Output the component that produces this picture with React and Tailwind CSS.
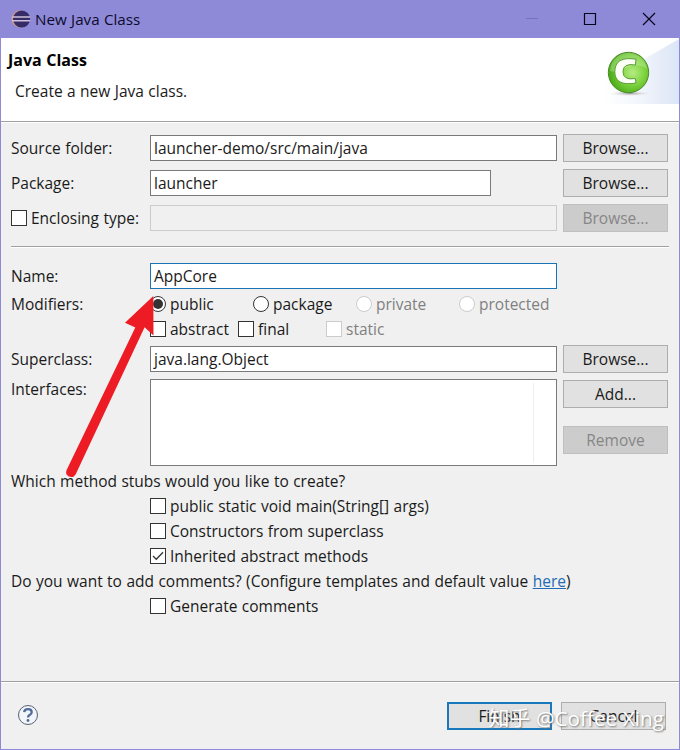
import React from 'react';

const METHOD_STUBS = [
  { label: 'public static void main(String[] args)', checked: false },
  { label: 'Constructors from superclass', checked: false },
  { label: 'Inherited abstract methods', checked: true },
];

const EclipseIcon = () => (
  <svg width="20" height="20" viewBox="0 0 20 20" className="shrink-0">
    <circle cx="9" cy="10" r="8.4" fill="#d99a78" />
    <circle cx="10.6" cy="10" r="8.6" fill="#352b66" />
    <path d="M1 7.9H19.2M1 11.7H19.2" stroke="#cfc0dc" strokeWidth="1.5" />
  </svg>
);

const ClassBanner = () => (
  <svg width="75" height="66" viewBox="0 0 75 66">
    <defs>
      <linearGradient id="beam" x1="0" y1="0" x2="1" y2="0">
        <stop offset="0" stopColor="#ffffff" />
        <stop offset="0.5" stopColor="#f1f5fc" />
        <stop offset="1" stopColor="#dbe5f5" />
      </linearGradient>
      <radialGradient id="ball" cx="0.6" cy="0.5" r="0.6">
        <stop offset="0" stopColor="#b4ec84" />
        <stop offset="0.5" stopColor="#80d440" />
        <stop offset="1" stopColor="#44a814" />
      </radialGradient>
      <radialGradient id="ballShadow">
        <stop offset="0" stopColor="#9a9a9a" />
        <stop offset="1" stopColor="#ffffff" stopOpacity="0" />
      </radialGradient>
    </defs>
    <path d="M0 44L75 1V66H0Z" fill="url(#beam)" />
    <path d="M0 66V50Q40 24 75 22V66Z" fill="url(#beam)" opacity="0.8" />
    <ellipse cx="26" cy="55.5" rx="24" ry="3" fill="url(#ballShadow)" />
    <circle cx="24.5" cy="34.5" r="20.2" fill="url(#ball)" stroke="#4d8a2c" strokeWidth="1" />
    <path d="M6 33A18.6 18.6 0 0 1 43 31Q34 24 22 30Q12 35 6 33Z" fill="#d8f7bb" opacity="0.35" />
    <path
      d="M32 21.2L31.4 27Q19 24.8 19 33.8Q19 42.4 31.4 40.6L32 45Q10.8 48.6 10.8 33.8Q10.8 17.8 32 21.2Z"
      fill="#fbfff6"
      stroke="#5b9c36"
      strokeWidth="1"
    />
  </svg>
);

const TitleBar = () => (
  <div className="flex h-[38px] shrink-0 items-center bg-[#8f8ad8] pl-[11px] text-[#0c0a2c]">
    <EclipseIcon />
    <span className="ml-1 flex-1 text-[15.2px]">New Java Class</span>
    <svg width="130" height="14" viewBox="0 0 130 14" fill="none" className="mr-6">
      <path d="M0 6.5H12" stroke="#7772b8" />
      <path d="M58.5 1.5H69.5V12.5H58.5Z" stroke="#08061c" strokeWidth="1.2" />
      <path d="M117 1L129 13M129 1L117 13" stroke="#08061c" strokeWidth="1.2" />
    </svg>
  </div>
);

const Label = ({ children }) => <div className="w-[139px] shrink-0 whitespace-nowrap">{children}</div>;

const Button = ({ children, disabled }) => (
  <button
    className={
      disabled
        ? 'h-7 w-[105px] shrink-0 border border-[#bfbfbf] bg-[#cccccc] text-[#868686]'
        : 'h-7 w-[105px] shrink-0 border border-[#adadad] bg-[#e1e1e1]'
    }
  >
    {children}
  </button>
);

const Field = ({ value, className = 'w-[407px] border-[#7a7a7a] bg-white' }) => (
  <div className={`flex h-[26px] shrink-0 items-center border pl-[3px] ${className}`}>{value}</div>
);

const Check = ({ label, checked, disabled, className = '' }) => (
  <div className={`flex items-center gap-1 ${disabled ? 'text-[#808080]' : ''} ${className}`}>
    <span
      className={`flex size-4 shrink-0 items-center justify-center border bg-white ${disabled ? 'border-[#cccccc]' : 'border-[#333333]'}`}
    >
      {checked && (
        <svg width="12" height="12" viewBox="0 0 12 12" fill="none" stroke="#333333" strokeWidth="1.3">
          <path d="M1 6L4.3 9.3L11 2.2" />
        </svg>
      )}
    </span>
    <span>{label}</span>
  </div>
);

const Radio = ({ label, checked, disabled, className = '' }) => (
  <div className={`flex items-center gap-1 ${disabled ? 'text-[#808080]' : ''} ${className}`}>
    <span
      className={`flex size-4 shrink-0 items-center justify-center rounded-full border bg-white ${disabled ? 'border-[#cccccc]' : 'border-[#333333]'}`}
    >
      {checked && <span className="size-2.5 rounded-full bg-[#333333]" />}
    </span>
    <span>{label}</span>
  </div>
);

const PointerArrow = () => (
  <svg width="680" height="750" viewBox="0 0 680 750" className="pointer-events-none absolute -left-px -top-px">
    <path
      d="M153.3 296L125 322.7L135.3 327.6L66.5 470.3Q65 474.5 68.8 476.6Q73.3 478.2 75.6 474.4L144.6 327.2L153.5 335.5Z"
      fill="#ed1c24"
    />
  </svg>
);

const App = () => (
  <div className="relative flex h-[750px] w-[680px] flex-col overflow-hidden border border-[#8f8ad8] bg-[#f0f0f0] font-['Open_Sans','Noto_Sans_CJK_SC',sans-serif] text-[15.5px] leading-5 text-[#1a1a1a] [word-spacing:0.4px]">
    <div className="-mx-px -mt-px">
      <TitleBar />
    </div>

    <div className="flex h-21 shrink-0 justify-between border-b border-[#a0a0a0] bg-white">
      <div className="pl-[7px] pt-3">
        <div className="text-[16px] font-bold text-black">Java Class</div>
        <div className="mt-[11px] pl-[7px]">Create a new Java class.</div>
      </div>
      <ClassBanner />
    </div>

    <div className="flex flex-1 flex-col border-t border-white pl-2.5 pt-[11px]">
      <div className="flex flex-col gap-[7px]">
        <div className="flex items-center">
          <Label>Source folder:</Label>
          <Field value="launcher-demo/src/main/java" />
          <div className="w-1.5" />
          <Button>Browse...</Button>
        </div>
        <div className="flex items-center">
          <Label>Package:</Label>
          <Field value="launcher" className="w-[341px] border-[#7a7a7a] bg-white" />
          <div className="w-[72px]" />
          <Button>Browse...</Button>
        </div>
        <div className="flex items-center">
          <Label>
            <Check label="Enclosing type:" />
          </Label>
          <Field className="w-[407px] border-[#cccccc] bg-[#f0f0f0]" />
          <div className="w-1.5" />
          <Button disabled>Browse...</Button>
        </div>
      </div>

      <div className="mr-[10px] mt-[14px] h-0.5 border-b border-t border-b-white border-t-[#a0a0a0]" />

      <div className="mt-[15px] flex items-center">
        <Label>Name:</Label>
        <Field value="AppCore" className="w-[407px] border-[#1874b4] bg-white" />
      </div>

      <div className="mt-[5px] flex items-center">
        <Label>Modifiers:</Label>
        <Radio label="public" checked className="w-[103px]" />
        <Radio label="package" className="w-[103px]" />
        <Radio label="private" disabled className="w-[103px]" />
        <Radio label="protected" disabled />
      </div>
      <div className="mt-[5px] flex items-center pl-[139px]">
        <Check label="abstract" className="w-[88px]" />
        <Check label="final" className="w-[88px]" />
        <Check label="static" disabled />
      </div>

      <div className="mt-[6px] flex items-center">
        <Label>Superclass:</Label>
        <Field value="java.lang.Object" />
        <div className="w-1.5" />
        <Button>Browse...</Button>
      </div>

      <div className="mt-[6px] flex">
        <Label>Interfaces:</Label>
        <div className="flex h-[87px] w-[407px] shrink-0 border border-[#7a7a7a] bg-white py-[3px]">
          <div className="w-[383px] border-r border-[#eeeeee]" />
        </div>
        <div className="ml-1.5 flex flex-col gap-[18px] pt-px">
          <Button>Add...</Button>
          <Button disabled>Remove</Button>
        </div>
      </div>

      <div className="mt-[5px]">Which method stubs would you like to create?</div>
      <div className="mt-[5px] flex flex-col gap-[5px] pl-[139px]">
        {METHOD_STUBS.map((stub) => (
          <Check key={stub.label} label={stub.label} checked={stub.checked} />
        ))}
      </div>
      <div className="mt-[5px] whitespace-nowrap">
        Do you want to add comments? (Configure templates and default value{' '}
        <a className="text-[#1f6cb5] underline">here</a>)
      </div>
      <Check label="Generate comments" className="mt-[5px] pl-[139px]" />
    </div>

    <div className="flex h-[68px] shrink-0 items-center border-t border-[#a0a0a0] pl-4 shadow-[inset_0_1px_0_#ffffff]">
      <svg width="22" height="22" viewBox="0 0 22 22" fill="none" className="-mt-0.5">
        <circle cx="11" cy="11" r="9.5" fill="#f2f5f9" stroke="#596273" />
        <path d="M7.2 8.2Q7.4 5.2 11 5.2Q14.7 5.2 14.7 8.2Q14.7 9.8 12.6 11Q11 12 11 13.6" stroke="#526a9c" strokeWidth="2.3" />
        <circle cx="11" cy="16.5" r="1.4" fill="#526a9c" />
      </svg>
      <div className="ml-auto mr-[13px] flex gap-[9px]">
        <button className="h-7 w-[105px] border-2 border-[#1878bc] bg-[#e1e1e1]">Finish</button>
        <Button>Cancel</Button>
      </div>
    </div>

    <PointerArrow />
    <div className="absolute bottom-[19px] right-[15px] whitespace-nowrap text-[20.7px] leading-6 text-white [text-shadow:1px_1px_2px_#777777]">
      知乎 @Coffee Xing
    </div>
  </div>
);

export default App;
